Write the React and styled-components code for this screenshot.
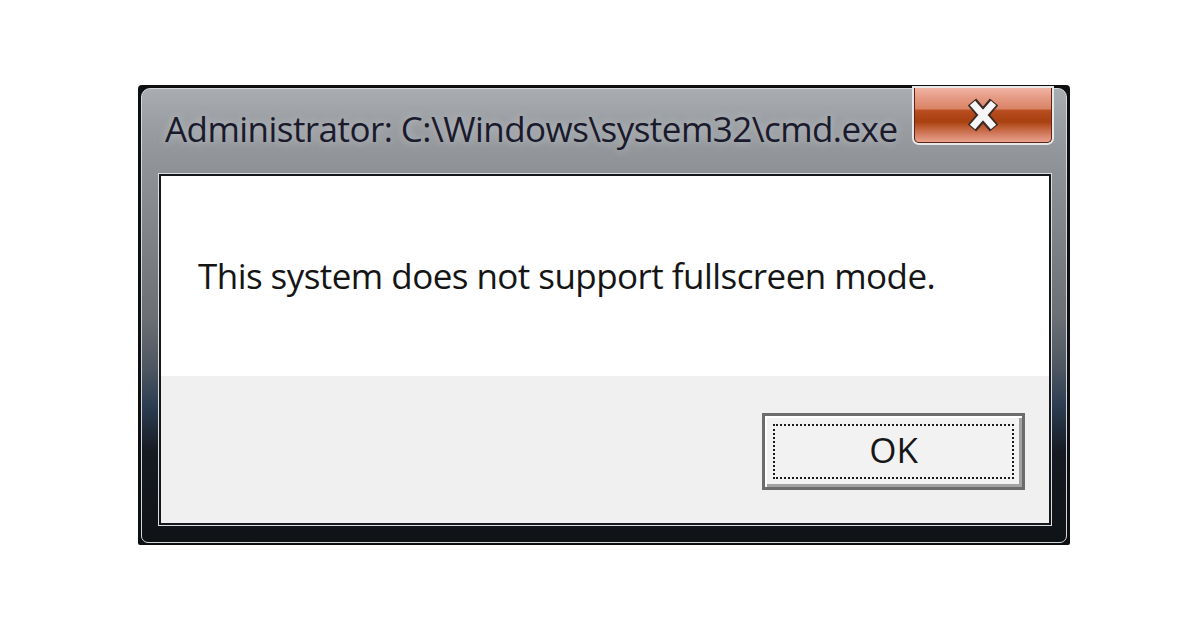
import React from "react";
import styled, { createGlobalStyle } from "styled-components";

const Global = createGlobalStyle`
  html, body { margin: 0; padding: 0; background: #ffffff; }
  body { width: 1200px; height: 627px; overflow: hidden; }
`;

const Page = styled.div`
  width: 1200px;
  height: 627px;
  padding: 85px 0 0 138px;
  box-sizing: border-box;
  background: #fff;
`;

const Window = styled.div`
  width: 932px;
  height: 460px;
  box-sizing: border-box;
  background: #0d0f11;
  padding: 3px 3px 2px 3px;
  border-radius: 4px 4px 2px 2px;
`;

const Frame = styled.div`
  height: 100%;
  box-sizing: border-box;
  border: 1px solid #d4d8dc;
  border-radius: 9px 9px 7px 7px;
  background: linear-gradient(
    to bottom,
    #a9adb1 0%,
    #9a9ea2 8%,
    #909498 16%,
    #82868a 30%,
    #6c7075 50%,
    #4c5560 62%,
    #2c3d52 70%,
    #161b22 80%,
    #101316 100%
  );
  display: flex;
  flex-direction: column;
  padding: 0 14px 17px 16px;
`;

const TitleBar = styled.div`
  position: relative;
  height: 84px;
  display: flex;
  align-items: center;
  padding-left: 7px;
  padding-bottom: 6px;
  box-sizing: border-box;
`;

const Title = styled.div`
  font-family: "Open Sans", "Noto Sans", sans-serif;
  font-size: 35px;
  color: #1a1a2c;
  letter-spacing: -0.55px;
  white-space: nowrap;
  text-shadow: 0 0 8px rgba(210, 214, 218, 0.7);
`;

const CloseButton = styled.div`
  position: absolute;
  top: -1px;
  right: 0px;
  width: 138px;
  height: 55px;
  box-sizing: border-box;
  border: 1px solid #5c2412;
  border-top: none;
  border-radius: 0 0 5px 5px;
  box-shadow: 0 0 0 2px #e6e8ea;
  background: linear-gradient(
    to bottom,
    #f0b4a4 0%,
    #e59a84 18%,
    #da8466 38%,
    #b84d20 42%,
    #a9400f 62%,
    #bd5a30 72%,
    #d7836a 88%,
    #e8a08a 100%
  );
  display: flex;
  align-items: center;
  justify-content: center;
`;

const ClientArea = styled.div`
  flex: 1;
  display: flex;
  flex-direction: column;
  border: 2px solid #15181b;
  box-shadow: 0 0 0 1px #dcdfe2;
  margin: 1px 1px 0 1px;
  background: #fff;
`;

const MessagePane = styled.div`
  height: 200px;
  background: #ffffff;
  display: flex;
  align-items: center;
  padding-left: 37px;
  padding-bottom: 2px;
  box-sizing: border-box;
`;

const Message = styled.div`
  font-family: "Open Sans", "Noto Sans", sans-serif;
  font-size: 35px;
  color: #151515;
  letter-spacing: -0.55px;
`;

const Footer = styled.div`
  flex: 1;
  background: #f0f0f0;
  display: flex;
  justify-content: flex-end;
  align-items: flex-start;
  padding: 37px 24px 0 0;
`;

const Button = styled.div`
  width: 263px;
  height: 77px;
  box-sizing: border-box;
  border: 3px solid #6c6c6c;
  background: #f2f2f2;
  box-shadow: inset 2px 2px 0 #ffffff, inset -3px -3px 0 #a2a2a2;
  padding: 8px;
  display: flex;
`;

const FocusRing = styled.div`
  flex: 1;
  border: 2px dotted #1a1a1a;
  display: flex;
  align-items: center;
  justify-content: center;
  padding-bottom: 5px;
  font-family: "Open Sans", "Noto Sans", sans-serif;
  font-size: 35px;
  color: #161616;
`;

const CloseGlyph = () => (
  <svg width="40" height="34" viewBox="0 0 40 34">
    <path
      d="M9 4 L31 30 M31 4 L9 30"
      stroke="#3a2a26"
      strokeWidth="11"
      strokeLinecap="butt"
      fill="none"
    />
    <path
      d="M9.5 5 L30.5 29 M30.5 5 L9.5 29"
      stroke="#f6f6f6"
      strokeWidth="7"
      strokeLinecap="butt"
      fill="none"
    />
  </svg>
);

export default function App() {
  return (
    <Page>
      <Global />
      <Window>
        <Frame>
          <TitleBar>
            <Title>Administrator: C:\Windows\system32\cmd.exe</Title>
            <CloseButton>
              <CloseGlyph />
            </CloseButton>
          </TitleBar>
          <ClientArea>
            <MessagePane>
              <Message>This system does not support fullscreen mode.</Message>
            </MessagePane>
            <Footer>
              <Button>
                <FocusRing>OK</FocusRing>
              </Button>
            </Footer>
          </ClientArea>
        </Frame>
      </Window>
    </Page>
  );
}
